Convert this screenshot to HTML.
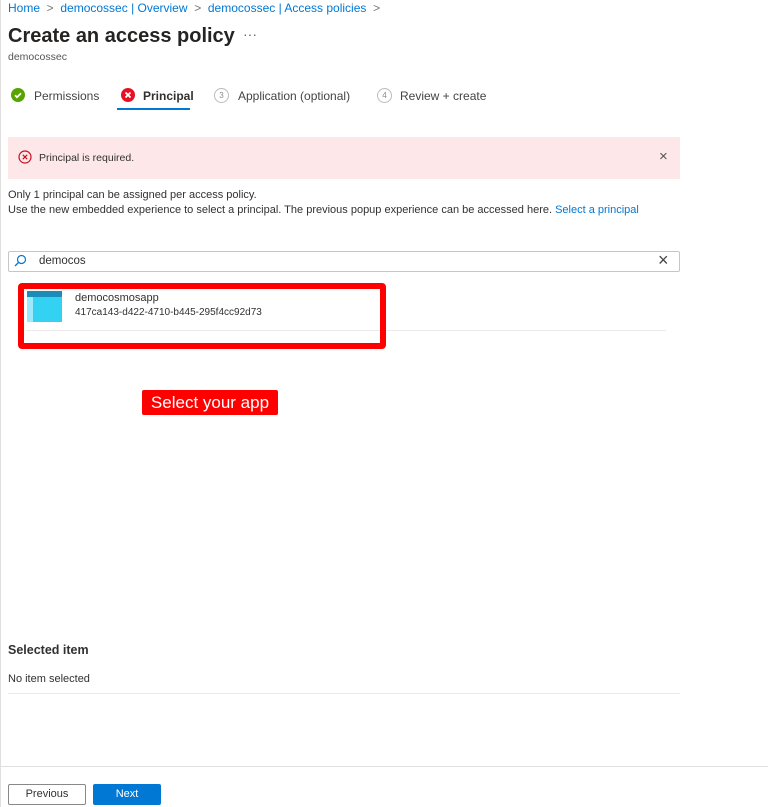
<!DOCTYPE html>
<html><head><style>
body{margin:0;width:768px;height:807px;background:#fff;font-family:"Liberation Sans",sans-serif;color:#323130;position:relative;overflow:hidden}
.a{position:absolute;white-space:nowrap}
.blue{color:#0078d4}
</style></head><body>
<div style="position:absolute;left:0;top:0;width:1px;height:807px;background:#e1dfdd"></div>
<div class="a blue" style="left:8px;top:1px;font-size:12px">Home <span style="color:#777">&nbsp;&gt;&nbsp;</span> democossec | Overview <span style="color:#777">&nbsp;&gt;&nbsp;</span> democossec | Access policies <span style="color:#777">&nbsp;&gt;</span></div>
<div class="a" style="left:8px;top:25px;font-size:20px;font-weight:bold;color:#252423">Create an access policy</div>
<div class="a" style="left:243px;top:26px;font-size:14px;color:#666">···</div>
<div class="a" style="left:8px;top:51px;font-size:10.5px;color:#555">democossec</div>
<svg class="a" style="left:11px;top:88px" width="14" height="14"><circle cx="7" cy="7" r="7" fill="#57a300"/><path d="M4 7.2l2 2 4-4" stroke="#fff" stroke-width="1.8" fill="none"/></svg>
<div class="a" style="left:34px;top:89px;font-size:12px;color:#444">Permissions</div>
<svg class="a" style="left:121px;top:88px" width="14" height="14"><circle cx="7" cy="7" r="7" fill="#e81123"/><path d="M4.5 4.5l5 5M9.5 4.5l-5 5" stroke="#fff" stroke-width="1.8"/></svg>
<div class="a" style="left:143px;top:89px;font-size:12px;color:#323130;font-weight:bold">Principal</div>
<div style="position:absolute;left:117px;top:108px;width:73px;height:2px;background:#0078d4"></div>
<div class="a" style="left:214px;top:88px;width:13px;height:13px;border:1px solid #bbb;border-radius:50%;font-size:8px;text-align:center;line-height:13px;color:#888">3</div>
<div class="a" style="left:238px;top:89px;font-size:12px;color:#444">Application (optional)</div>
<div class="a" style="left:377px;top:88px;width:13px;height:13px;border:1px solid #bbb;border-radius:50%;font-size:8px;text-align:center;line-height:13px;color:#888">4</div>
<div class="a" style="left:400px;top:89px;font-size:12px;color:#444">Review + create</div>
<div style="position:absolute;left:8px;top:137px;width:672px;height:42px;background:#fde7e9"></div>
<svg class="a" style="left:18px;top:150px" width="14" height="14"><circle cx="7" cy="7" r="6" stroke="#c50f1f" fill="none" stroke-width="1.2"/><path d="M4.8 4.8l4.4 4.4M9.2 4.8l-4.4 4.4" stroke="#c50f1f" stroke-width="1.2"/></svg>
<div class="a" style="left:39px;top:152px;font-size:10.5px">Principal is required.</div>
<div class="a" style="left:659px;top:148px;font-size:15px;color:#555">×</div>
<div class="a" style="left:8px;top:189px;font-size:11px">Only 1 principal can be assigned per access policy.</div>
<div class="a" style="left:8px;top:204px;font-size:11px">Use the new embedded experience to select a principal. The previous popup experience can be accessed here. <span class="blue">Select a principal</span></div>
<div style="position:absolute;left:8px;top:251px;width:670px;height:19px;border:1px solid #c8c6c4;border-radius:2px"></div>
<svg class="a" style="left:13px;top:254px" width="14" height="14"><circle cx="8.5" cy="5.5" r="4" stroke="#0078d4" fill="none" stroke-width="1.2"/><path d="M5.5 8.5L2 12" stroke="#0078d4" stroke-width="1.3"/></svg>
<div class="a" style="left:39px;top:255px;font-size:11.5px">democos</div>
<div class="a" style="left:658px;top:250px;font-size:18px;color:#444">×</div>
<div style="position:absolute;left:26px;top:330px;width:640px;height:1px;background:#edebe9"></div>
<div style="position:absolute;left:18px;top:283px;width:356px;height:54px;border:6px solid #ff0000;border-radius:4px"></div>
<div style="position:absolute;left:27px;top:291px;width:35px;height:31px;background:#33d1f2"></div>
<div style="position:absolute;left:27px;top:291px;width:35px;height:6px;background:#1b8bb8"></div>
<div style="position:absolute;left:27px;top:297px;width:6px;height:25px;background:#9ce9fb"></div>
<div class="a" style="left:75px;top:292px;font-size:11px">democosmosapp</div>
<div class="a" style="left:75px;top:307px;font-size:10px">417ca143-d422-4710-b445-295f4cc92d73</div>
<div class="a" style="left:142px;top:390px;width:136px;height:25px;background:#ff0000;border-radius:2px;color:#fff;font-size:17px;line-height:25px;text-align:center">Select your app</div>
<div class="a" style="left:8px;top:643px;font-size:12.5px;font-weight:bold">Selected item</div>
<div class="a" style="left:8px;top:673px;font-size:11px">No item selected</div>
<div style="position:absolute;left:8px;top:693px;width:672px;height:1px;background:#edebe9"></div>
<div style="position:absolute;left:0;top:766px;width:768px;height:1px;background:#e1dfdd"></div>
<div class="a" style="left:8px;top:783px;width:76px;height:19px;border:1px solid #8a8886;border-radius:2px;font-size:11px;text-align:center;line-height:19px;top:784px">Previous</div>
<div class="a" style="left:93px;top:784px;width:68px;height:21px;background:#0078d4;border-radius:2px;color:#fff;font-size:11px;text-align:center;line-height:21px">Next</div>
</body></html>
